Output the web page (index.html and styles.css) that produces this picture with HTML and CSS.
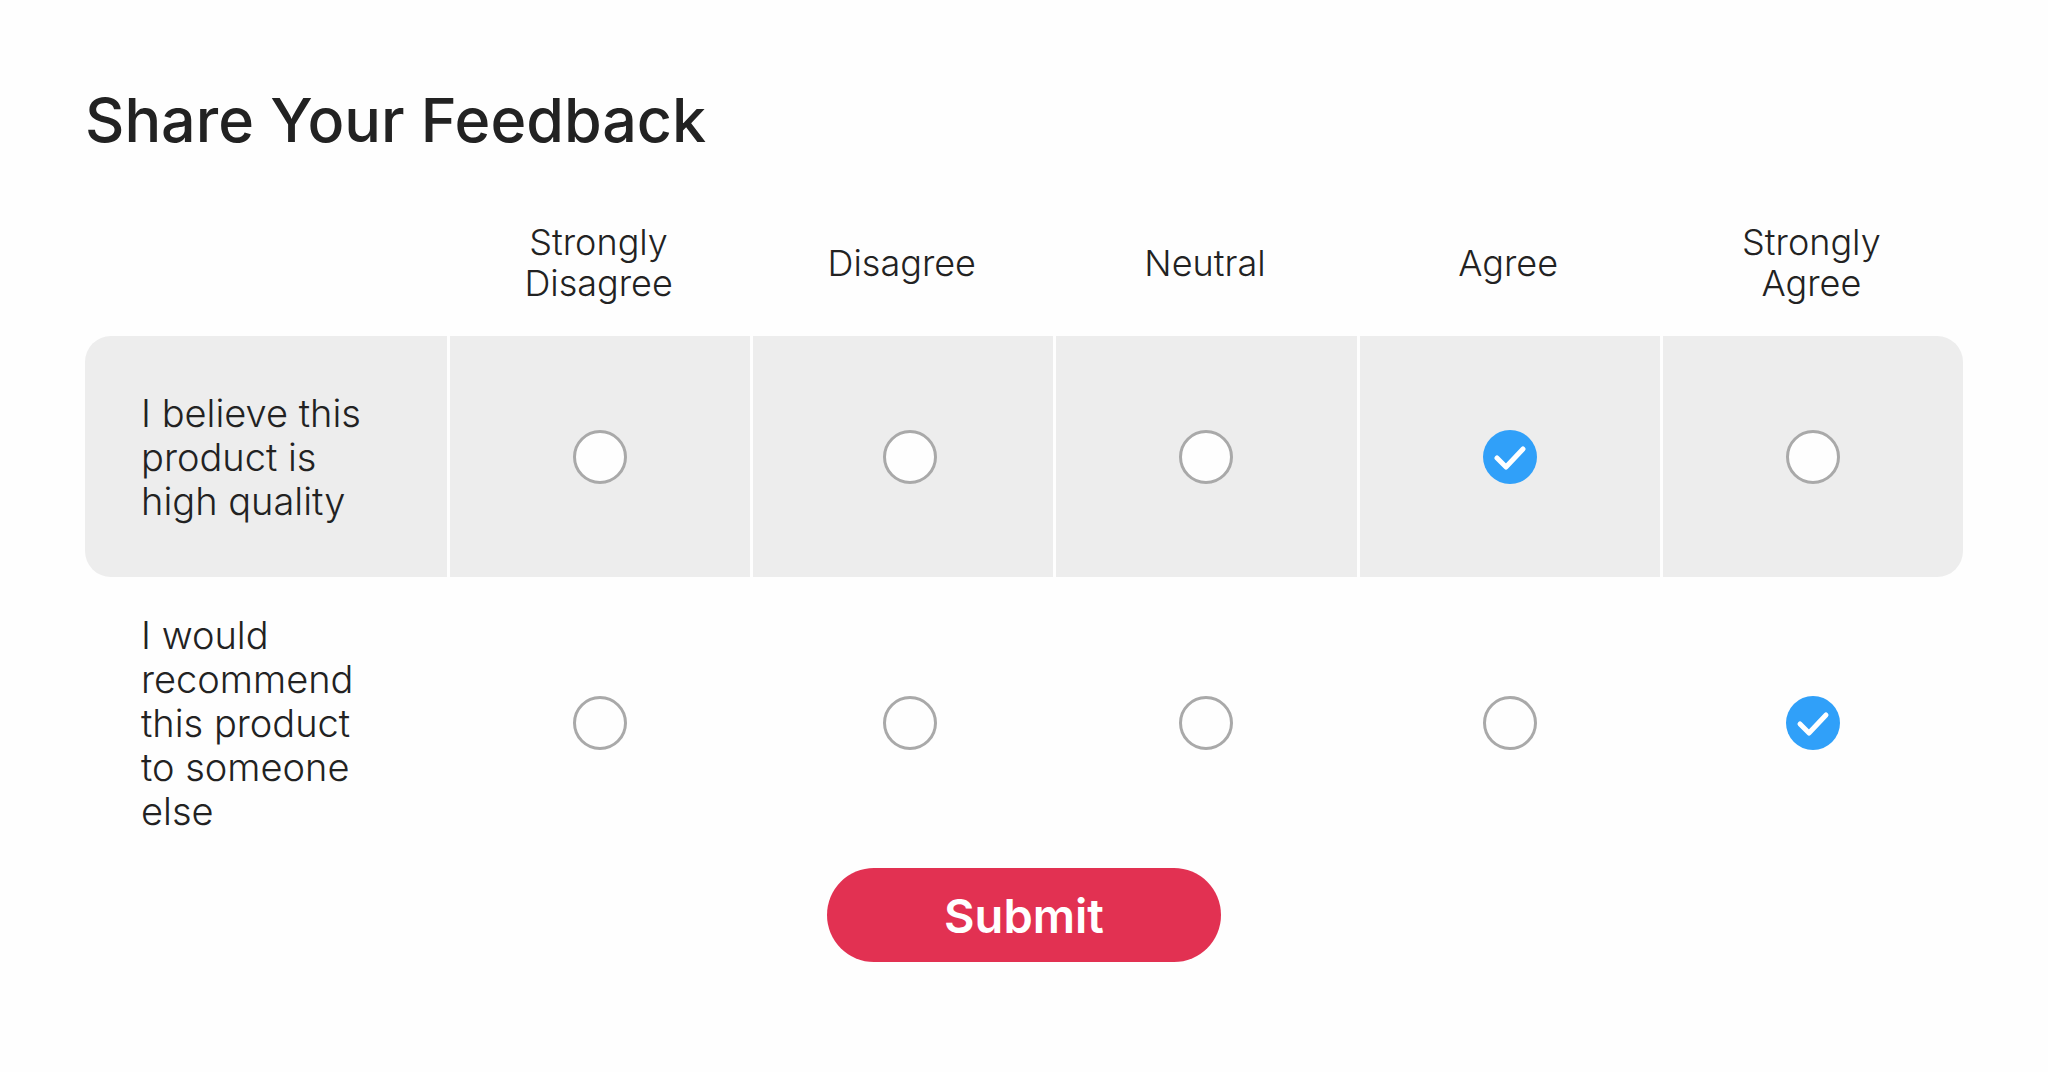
FILE: index.html
```
<!DOCTYPE html>
<html lang="en">

<head>
  <meta charset="UTF-8">
  <meta name="viewport" content="width=device-width, initial-scale=1.0">
  <title>Share Your Feedback</title>
  <link rel="stylesheet" href="styles.css">
</head>

<body>

  <form class="feedback">
    <h1>Share Your Feedback</h1>

    <table class="survey">
      <thead>
        <tr>
          <td class="corner"></td>
          <th scope="col" id="c1">Strongly<br>Disagree</th>
          <th scope="col" id="c2">Disagree</th>
          <th scope="col" id="c3">Neutral</th>
          <th scope="col" id="c4">Agree</th>
          <th scope="col" id="c5">Strongly<br>Agree</th>
        </tr>
      </thead>
      <tbody>
        <tr class="shaded">
          <th scope="row" id="q1">I believe this product is high quality</th>
          <td><input type="radio" name="quality" value="1" aria-labelledby="q1 c1"></td>
          <td><input type="radio" name="quality" value="2" aria-labelledby="q1 c2"></td>
          <td><input type="radio" name="quality" value="3" aria-labelledby="q1 c3"></td>
          <td><input type="radio" name="quality" value="4" aria-labelledby="q1 c4" checked></td>
          <td><input type="radio" name="quality" value="5" aria-labelledby="q1 c5"></td>
        </tr>
        <tr>
          <th scope="row" id="q2">I would recommend this product to someone else</th>
          <td><input type="radio" name="recommend" value="1" aria-labelledby="q2 c1"></td>
          <td><input type="radio" name="recommend" value="2" aria-labelledby="q2 c2"></td>
          <td><input type="radio" name="recommend" value="3" aria-labelledby="q2 c3"></td>
          <td><input type="radio" name="recommend" value="4" aria-labelledby="q2 c4"></td>
          <td><input type="radio" name="recommend" value="5" aria-labelledby="q2 c5" checked></td>
        </tr>
      </tbody>
    </table>

    <button class="submit" type="submit">Submit</button>
  </form>

</body>

</html>
```

FILE: styles.css
```
body {
  margin: 0;
  background-color: #fefefe;
  color: #222;
  font-family: Inter, sans-serif;
}

.feedback {
  display: flex;
  flex-direction: column;
  padding: 84px 85px;
}

h1 {
  margin: 0 0 34px;
  font-size: 61px;
  line-height: 72px;
  font-weight: 500;
}

.survey {
  width: 100%;
  table-layout: fixed;
  border-collapse: separate;
  border-spacing: 0;
}

.survey th,
.survey td {
  box-sizing: border-box;
  padding: 0;
  font-weight: 300;
  text-align: center;
  vertical-align: middle;
}

.survey thead th {
  height: 146px;
  font-size: 36px;
  line-height: 41px;
}

.survey .corner {
  width: 362px;
}

.survey tbody th {
  padding: 0 64px 0 56px;
  font-size: 38px;
  line-height: 44px;
  text-align: left;
}

.survey tbody tr {
  height: 291px;
}

.survey tbody .shaded {
  height: 241px;
}

.survey tbody td {
  border-left: 3px solid #fefefe;
}

.survey tbody td:nth-child(3) {
  padding-left: 14px;
}

.shaded th,
.shaded td {
  background-color: #ededed;
}

.shaded th {
  border-radius: 26px 0 0 26px;
}

.shaded td:last-child {
  border-radius: 0 26px 26px 0;
}

input[type="radio"] {
  appearance: none;
  box-sizing: border-box;
  display: block;
  width: 54px;
  height: 54px;
  margin: 0 auto;
  border: 3px solid #a9a9a9;
  border-radius: 50%;
  background-color: #fefefe;
  cursor: pointer;
}

input[type="radio"]:checked {
  border: none;
  background: #30a0f9 url("data:image/svg+xml,%3Csvg xmlns='http://www.w3.org/2000/svg' viewBox='0 0 54 54'%3E%3Cpath d='M14 28l9 9L40 19' fill='none' stroke='white' stroke-width='5' stroke-linecap='round' stroke-linejoin='round'/%3E%3C/svg%3E") center / 100% no-repeat;
}

.submit {
  align-self: center;
  width: 394px;
  height: 94px;
  border: none;
  border-radius: 47px;
  background-color: #e23152;
  color: #fff;
  font-family: inherit;
  font-size: 47px;
  font-weight: 600;
  cursor: pointer;
}
```
